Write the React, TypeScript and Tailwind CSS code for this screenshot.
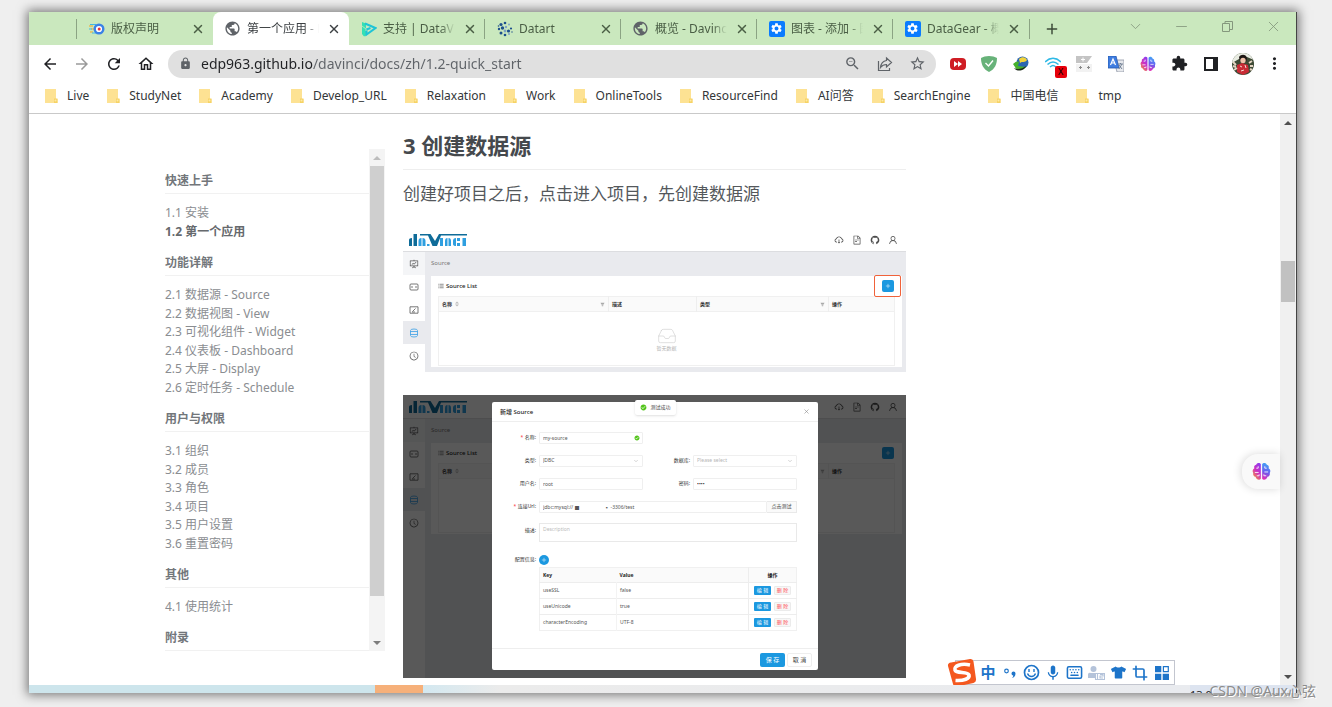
import type { ComponentType, ReactNode } from 'react';
import { clsx } from 'clsx';
import { ChevronDown, Crop, Inbox, Keyboard, List, Minus, Plus, X } from 'lucide-react';
import {
  AiFillFilter,
  AiOutlineClockCircle,
  AiOutlineCloudDownload,
  AiOutlineFileText,
  AiOutlineFundProjectionScreen,
  AiOutlineGithub,
  AiOutlineUser,
} from 'react-icons/ai';
import {
  MdArrowBack,
  MdArrowForward,
  MdCheckCircle,
  MdExtension,
  MdLock,
  MdMic,
  MdMoreVert,
  MdOutlineHome,
  MdPublic,
  MdRefresh,
  MdSettings,
  MdStarBorder,
  MdZoomOut,
} from 'react-icons/md';
import { FaTshirt } from 'react-icons/fa';

interface Tab {
  title: string;
  icon: ReactNode;
  active?: boolean;
}

interface Section {
  title: string;
  items: string[];
}

const GearIcon = () => (
  <span className="flex size-4 items-center justify-center rounded-xs bg-[#0a7cff] text-white">
    <MdSettings size={13} />
  </span>
);

const MetabaseIcon = () => (
  <svg viewBox="0 0 16 16" className="size-4">
    <path d="M0 5h4M2 8h3M1 11h3" stroke="#f5a623" strokeWidth="1.2" />
    <path d="M1 3.5h6M0 8h3M3 12h4" stroke="#3db9e8" strokeWidth="1.2" />
    <circle cx="10" cy="8" r="4.3" fill="#fff" stroke="#3b82e6" strokeWidth="2.4" />
    <circle cx="10.2" cy="8" r="1.5" fill="#e5343d" />
  </svg>
);

const DataVIcon = () => (
  <svg viewBox="0 0 16 16" className="size-4" fill="none" strokeWidth="2">
    <path d="M1 1l4 1.5v12L3 15.5 1 13z" fill="#35e0b4" />
    <path d="M4 2.5L14.5 7 5.5 13.5V8.5l4-1.5" stroke="#1fc4d6" />
    <path d="M1 5l4 3v2" stroke="#c9e9bd" strokeWidth="0.8" />
  </svg>
);

const DatartIcon = () => (
  <svg viewBox="0 0 16 16" className="size-4">
    {[
      [8, 2, 1.3], [4, 3.5, 1.6], [12, 3.5, 1], [2, 8, 1.2], [5.5, 7, 1.7], [9, 6, 1.2], [14, 7.5, 1.1],
      [4, 12, 1.5], [8, 10, 1.4], [11.5, 10, 1.6], [8, 14, 1.3], [12, 13, 1], [1.5, 5, 0.8], [15, 11, 0.7],
    ].map(([cx, cy, r], i) => (
      <circle key={i} cx={cx} cy={cy} r={r} fill={i % 3 === 2 ? '#7fa3c4' : '#1d4f8c'} />
    ))}
  </svg>
);

const tabs: Tab[] = [
  { title: '版权声明', icon: <MetabaseIcon /> },
  { title: '第一个应用 - Davinci', icon: <MdPublic size={17} className="text-[#5f6368]" />, active: true },
  { title: '支持 | DataV', icon: <DataVIcon /> },
  { title: 'Datart', icon: <DatartIcon /> },
  { title: '概览 - Davinci', icon: <MdPublic size={17} className="text-[#5f6368]" /> },
  { title: '图表 - 添加 - 图表', icon: <GearIcon /> },
  { title: 'DataGear - 概览', icon: <GearIcon /> },
];

const bookmarks = [
  'Live', 'StudyNet', 'Academy', 'Develop_URL', 'Relaxation', 'Work',
  'OnlineTools', 'ResourceFind', 'AI问答', 'SearchEngine', '中国电信', 'tmp',
];

const sections: Section[] = [
  { title: '快速上手', items: ['1.1 安装', '1.2 第一个应用'] },
  {
    title: '功能详解',
    items: [
      '2.1 数据源 - Source', '2.2 数据视图 - View', '2.3 可视化组件 - Widget',
      '2.4 仪表板 - Dashboard', '2.5 大屏 - Display', '2.6 定时任务 - Schedule',
    ],
  },
  {
    title: '用户与权限',
    items: ['3.1 组织', '3.2 成员', '3.3 角色', '3.4 项目', '3.5 用户设置', '3.6 重置密码'],
  },
  { title: '其他', items: ['4.1 使用统计'] },
  { title: '附录', items: [] },
];

const configRows = [
  { key: 'useSSL', value: 'false' },
  { key: 'useUnicode', value: 'true' },
  { key: 'characterEncoding', value: 'UTF-8' },
];

function BrainIcon({ className }: { className?: string }) {
  return (
    <svg viewBox="0 0 20 20" className={className}>
      <defs>
        <linearGradient id="brainLeft" x1="0.8" y1="0" x2="0.2" y2="1">
          <stop offset="0" stopColor="#8b3df0" />
          <stop offset="0.5" stopColor="#d02fc0" />
          <stop offset="1" stopColor="#f59a30" />
        </linearGradient>
        <linearGradient id="brainRight" x1="0.6" y1="0" x2="0.4" y2="1">
          <stop offset="0" stopColor="#3fa9f5" />
          <stop offset="0.55" stopColor="#6a5cf0" />
          <stop offset="1" stopColor="#e22fb5" />
        </linearGradient>
      </defs>
      <path d="M9.3 2.2C8.4.5 5 .6 4.4 3 2.5 3.3 1.8 5.2 2.5 6.6.6 7.5.2 10 1.3 11.5.7 13.5 2 15.3 3.7 15.6 4.5 18.8 8.3 19.5 9.3 17.5z" fill="url(#brainLeft)" />
      <path d="M10.7 2.2c.9-1.7 4.3-1.6 4.9.8 1.900.3 2.600 2.200 1.900 3.600 1.900.9 2.300 3.400 1.200 4.900.6 2-.7 3.800-2.400 4.100-.8 3.200-4.600 3.900-5.600 1.900z" fill="url(#brainRight)" />
      <path d="M4.5 6.5h2v-2M3 11h4M5 14.5h2.500V13M15.500 6.500h-2v-2M17 10.500h-4M15 14.500h-2.500V13" fill="none" stroke="#fff" strokeWidth="0.9" />
    </svg>
  );
}

function TabItem({ tab }: { tab: Tab }) {
  return (
    <div
      className={clsx(
        'flex w-[136px] items-center pr-2 pl-[11px]',
        tab.active ? 'rounded-t-lg bg-white text-[#3c4043]' : 'text-[#4a5e45]',
      )}
    >
      <span className="mr-1.5 flex w-[17px] shrink-0 justify-center">{tab.icon}</span>
      <button
        role="tab"
        aria-selected={!!tab.active}
        className="min-w-0 flex-1 overflow-hidden mask-r-from-80% text-left text-xs whitespace-nowrap"
      >
        {tab.title}
      </button>
      <button aria-label="Close tab" className="ml-2 shrink-0">
        <X size={14} strokeWidth={2.5} />
      </button>
    </div>
  );
}

function TabStrip() {
  return (
    <div className="flex h-[33px] shrink-0 bg-[#cae8be] pl-12">
      <div role="tablist" className="flex">
        {tabs.map((tab, i) => (
          <div key={tab.title} className="flex">
            {i !== 1 && i !== 2 && <span className="-ml-px h-5 w-px self-center bg-[#8ba383]" />}
            <TabItem tab={tab} />
          </div>
        ))}
      </div>
      <span className="h-5 w-px self-center bg-[#8ba383]" />
      <button aria-label="New tab" className="ml-3.5 text-[#3d4a39]">
        <Plus size={16} strokeWidth={2.2} />
      </button>
      <div className="ml-auto flex items-start gap-[29px] pt-1.5 pr-3.5 text-[#84977d]">
        <button aria-label="Search tabs"><ChevronDown size={17} strokeWidth={1.2} /></button>
        <button aria-label="Minimize"><Minus size={17} strokeWidth={1.2} /></button>
        <button aria-label="Restore">
          <svg viewBox="0 0 17 17" className="size-[17px]" fill="none" stroke="currentColor">
            <path d="M3.5 5.5h7v8h-7zM6 5.500V3.500h7.500v8h-3" />
          </svg>
        </button>
        <button aria-label="Close window"><X size={17} strokeWidth={1.2} /></button>
      </div>
    </div>
  );
}

function Extensions() {
  return (
    <div className="mr-1.5 ml-1.5 grid h-8 w-[348px] shrink-0 grid-cols-11 place-items-center">
      <button aria-label="Video player" className="flex h-3 w-4 items-center justify-center rounded-sm bg-[#cf1d24]">
        <svg viewBox="0 0 10 8" className="h-2 w-2.5" fill="#fff"><path d="M1 1l4 3-4 3zM5 1l4 3-4 3z" /></svg>
      </button>
      <button aria-label="AdGuard">
        <svg viewBox="0 0 16 16" className="size-4">
          <path d="M8 0c3 0 6 .8 8 2 0 6-2 11-8 14C2 13 0 8 0 2 2 .8 5 0 8 0z" fill="#67b279" />
          <path d="M4.5 7l3 3L12 4.500" fill="none" stroke="#fff" strokeWidth="1.4" />
        </svg>
      </button>
      <button aria-label="Download manager">
        <svg viewBox="0 0 16 16" className="size-4">
          <circle cx="9.5" cy="6.5" r="6" fill="#2b66b1" />
          <path d="M6 3c3-3 7-2 8 1-2 3-5 1-7 3z" fill="#f3d43b" />
          <path d="M0 8c3-3 5-3 6-2l-1 4 8 1c-3 4-9 4-11 0z" fill="#45b02c" />
          <path d="M1 12c4 2 8 1 12-2-1 4-8 7-12 2z" fill="#1d2b1b" />
        </svg>
      </button>
      <button aria-label="Wi-Fi" className="relative size-4">
        <svg viewBox="0 0 16 16" className="size-4" fill="none" stroke="#2fb9e6" strokeWidth="1.6">
          <path d="M0 6c5-5 11-5 16 0M2.5 8.5c4-3.500 7-3.500 11 0M5 11c2.500-2 3.500-2 6 0" />
        </svg>
        <span className="absolute top-2.5 left-2.5 flex size-3 items-center justify-center rounded-xs bg-red-600 text-[9px] text-black">X</span>
      </button>
      <button aria-label="Calculator">
        <svg viewBox="0 0 16 16" className="size-4">
          <path d="M0 0h16l-5 7H0z" fill="#c4c4c4" />
          <path d="M0 8h16v8H0z" fill="#f2f2f2" />
          <path d="M5 3.500h4M7 1.500v4" stroke="#fff" />
          <path d="M3 11.500h3M4.500 10v3M11 11.500h3M12.500 10v3" stroke="#888" fill="none" />
        </svg>
      </button>
      <button aria-label="Translate">
        <svg viewBox="0 0 16 16" className="size-4">
          <path d="M6 4h10v12H9z" fill="#e6e8ec" stroke="#8d96a5" strokeWidth="0.8" />
          <path d="M0 0h8l3 12H0z" fill="#3f7de0" stroke="#2558ad" strokeWidth="0.8" />
          <path d="M2.500 9L5 3l2.500 6M3.500 7h3" fill="none" stroke="#fff" strokeWidth="1.2" />
          <path d="M10 8h5M12.500 7v1M14 8l-3 5M11 9l3 4" fill="none" stroke="#6b7a90" strokeWidth="0.9" />
        </svg>
      </button>
      <button aria-label="Assistant"><BrainIcon className="size-4" /></button>
      <button aria-label="Extensions"><MdExtension size={17} /></button>
      <button aria-label="Side panel">
        <span className="block size-3.5 border-2 border-r-[5px] border-[#202124]" />
      </button>
      <button aria-label="Profile">
        <svg viewBox="0 0 22 22" className="size-[22px] rounded-full bg-[#3d4a35]">
          <path d="M0 0h22v7L15 4 7 6 0 10z" fill="#e9ece2" />
          <path d="M7 4c2-3 7-3 8 1l-1 4H8z" fill="#1e1714" />
          <circle cx="11" cy="7.5" r="2.7" fill="#efc3ab" />
          <path d="M5 12l5-2 6 2 1 7-6 3-6-3z" fill="#c92b35" />
          <path d="M1 9l3 3M17 10l3-2M2 17l3-2M18 16l2 1M1 13l3 1M18 13l3 0" stroke="#e3d3c2" strokeWidth="2" />
          <path d="M8 13l2 1M13 12l1 3M9 18l3-1" stroke="#f4dcd4" />
        </svg>
      </button>
      <button aria-label="Menu"><MdMoreVert size={19} /></button>
    </div>
  );
}

function ShareArrow() {
  return (
    <svg viewBox="0 0 16 16" className="size-4" fill="none" stroke="currentColor" strokeWidth="1.2">
      <path d="M1.500 5v9.500h11V12" />
      <path d="M9.500 2l5 4.500-5 4.500V8.500c-3 0-4.500 1-6 3 .4-3.500 2.500-6.500 6-7z" />
    </svg>
  );
}

function Toolbar() {
  const nav: { label: string; Icon: ComponentType<{ size?: number }>; dim?: boolean }[] = [
    { label: 'Back', Icon: MdArrowBack },
    { label: 'Forward', Icon: MdArrowForward, dim: true },
    { label: 'Reload', Icon: MdRefresh },
    { label: 'Home', Icon: MdOutlineHome },
  ];
  return (
    <div className="flex h-[37px] shrink-0 items-center bg-white pl-3 text-[#202124]">
      <div className="mr-[13px] flex gap-3.5">
        {nav.map(({ label, Icon, dim }) => (
          <button key={label} aria-label={label} className={clsx(dim && 'text-[#9a9a9a]')}>
            <Icon size={18} />
          </button>
        ))}
      </div>
      <div className="flex h-7 min-w-0 flex-1 items-center rounded-full bg-[#e0e0e0] pr-2.5 pl-[11px] text-[#5f6368]">
        <MdLock size={13} />
        {/* host part is darker than the path */}
        <input
          aria-label="Address"
          defaultValue="edp963.github.io/davinci/docs/zh/1.2-quick_start"
          className="ml-[9px] min-w-0 flex-1 bg-[linear-gradient(to_right,#202124_112px,#5f6368_112px)] bg-clip-text text-sm text-transparent"
        />
        <div className="flex gap-4">
          <button aria-label="Zoom"><MdZoomOut size={17} /></button>
          <button aria-label="Share"><ShareArrow /></button>
          <button aria-label="Bookmark this page"><MdStarBorder size={17} /></button>
        </div>
      </div>
      <Extensions />
    </div>
  );
}

function BookmarkBar() {
  return (
    <nav className="flex h-8 shrink-0 items-center gap-[18px] overflow-hidden border-b border-[#c9c9c9] bg-white pb-[3px] pl-4">
      {bookmarks.map((name) => (
        <a key={name} href="#" className="flex shrink-0 items-center gap-[9px] text-xs text-[#333638]">
          <svg viewBox="0 0 13 14" className="h-3.5 w-[13px]">
            <path d="M0 0h11v10h1.500v4H0z" fill="#fde293" />
            <path d="M9 9.500h3.500V14H9z" fill="#f6d365" />
            <circle cx="10.5" cy="11.5" r="1" fill="#fde9a9" />
          </svg>
          {name}
        </a>
      ))}
    </nav>
  );
}

function Arrow({ up, className }: { up?: boolean; className?: string }) {
  return (
    <svg viewBox="0 0 8 17" className={clsx('w-2 shrink-0', className)} fill="currentColor">
      <path d={up ? 'M0 11l4-4 4 4z' : 'M0 7l4 4 4-4z'} />
    </svg>
  );
}

function Sidebar() {
  return (
    <aside className="mt-[35px] flex h-[502px] w-[220px] shrink-0">
      <nav className="flex flex-1 flex-col gap-3 overflow-hidden pt-[22px] text-xs text-[#8a8d91]">
        {sections.map((section) => (
          <div key={section.title}>
            <h3 className="h-[23px] border-b border-[#f1f1f1] leading-5 font-bold text-[#72767a]">
              {section.title}
            </h3>
            <ul className="pt-2.5">
              {section.items.map((item) => (
                <li key={item} className="odd:h-[18px] odd:leading-[18px] even:h-[19px] even:leading-[19px]">
                  <a href="#" className={clsx(item.startsWith('1.2') && 'font-bold text-[#66696d]')}>
                    {item}
                  </a>
                </li>
              ))}
            </ul>
          </div>
        ))}
      </nav>
      <div className="flex w-4 flex-col items-center bg-[#f4f4f4]">
        <Arrow up className="h-[17px] text-[#bdbdbd]" />
        <span className="w-3.5 flex-1 bg-[#cfcfcf]" />
        <span className="h-[38px]" />
        <Arrow className="h-[17px] text-[#7d7d7d]" />
      </div>
    </aside>
  );
}

function DavinciLogo() {
  return (
    <svg viewBox="0 0 58 14" className="h-3.5 w-[58px]">
      <g fill="#0f6c99">
        <path d="M0 13V7q0-2 3-2v8zM4.500 1H8v12H4.500zM11 1h10.500l4.500 7 4-7H58v1.500H32L28 13h-4.500L19 2.500h-8z" />
      </g>
      <g fill="#2f9fe0">
        <path d="M9.500 13V8q0-3 3-3v8zM13.500 5q3 0 3 3v5h-3zM18 11h2.500v2H18zM31 5h3v8h-3zM36 13V8q0-3 2.500-3v8zM39.500 5Q42 5 42 8v5h-2.500zM44 8q0-3 3-3v8q-3 0-3-2zM48 5h3v3h-3zM48 10h3v3h-3zM53.500 5H57v8h-3.500z" />
      </g>
    </svg>
  );
}

const WidgetIcon = () => (
  <svg viewBox="0 0 10 8" className="h-2 w-2.5" fill="none" stroke="currentColor" strokeWidth="0.8">
    <path d="M1 .8h8v6.400H1zM3.500 5.500l3-3M3 6h3" />
  </svg>
);

const ViewIcon = () => (
  <svg viewBox="0 0 10 8" className="h-2 w-2.5" fill="none" stroke="currentColor" strokeWidth="0.8">
    <rect x="1" y="1" width="8" height="6" rx="1" />
    <path d="M3.500 3L2.500 4l1 1M6.500 3l1 1-1 1" />
  </svg>
);

const DatabaseIcon = () => (
  <svg viewBox="0 0 10 10" className="size-2.5" fill="none" stroke="currentColor" strokeWidth="0.8">
    <path d="M1.500 2.500q0-1.500 3.500-1.500t3.500 1.500v5q0 1.500-3.500 1.500t-3.500-1.500zM1.500 3.500h7M1.500 6.500h7" />
  </svg>
);

const railIcons: ComponentType<{ size?: number }>[] = [
  AiOutlineFundProjectionScreen,
  ViewIcon,
  WidgetIcon,
  DatabaseIcon,
  AiOutlineClockCircle,
];

const headerIcons = [AiOutlineCloudDownload, AiOutlineFileText, AiOutlineGithub, AiOutlineUser];

function SourceScreen({ highlight, className, children }: { highlight?: boolean; className: string; children?: ReactNode }) {
  return (
    <figure className={clsx('relative flex flex-col overflow-hidden bg-white text-[6px]', className)}>
      <div className="flex h-6 shrink-0 items-center justify-between border-b border-[#dcdde0] pr-2 pl-1.5">
        <DavinciLogo />
        <div className="flex gap-2 text-[#4c4c4c]">
          {headerIcons.map((Icon, i) => (
            <button key={i} aria-label="Header action"><Icon size={10} /></button>
          ))}
        </div>
      </div>
      <div className="flex min-h-0 flex-1 bg-[#e9eaee]">
        <div className="w-[22px] shrink-0 bg-white text-[#555]">
          {railIcons.map((Icon, i) => (
            <button
              key={i}
              aria-label="Section"
              className={clsx(
                'flex h-[23px] w-full items-center justify-center',
                i === 0 && 'bg-[#f4f5f7]',
                i === 3 && 'bg-[#e9eaee] text-[#3aa0e6]',
              )}
            >
              <Icon size={10} />
            </button>
          ))}
        </div>
        <div className="flex-1 pr-1 pl-1.5">
          <p className="h-6 leading-[23px] text-[#777]">Source</p>
          <div className="h-[91px] bg-white pr-[7px] pl-[7px]">
            <div className="flex h-5 items-center text-[#222]">
              <List size={6} className="mr-0.5" />
              <span className="flex-1 font-medium">Source List</span>
              <span
                className={clsx(
                  '-mr-1.5 flex h-[22px] w-[27px] items-center justify-center rounded-xs border',
                  highlight ? 'border-[#f0623a]' : 'border-transparent',
                )}
              >
                <button aria-label="Add source" className="flex size-3 items-center justify-center rounded-xs bg-[#1b98e0] text-white">
                  <Plus size={6} />
                </button>
              </span>
            </div>
            <table className="w-full table-fixed border border-[#f0f0f0] text-left text-[5px] leading-none">
              <thead className="bg-[#fafafa] text-[#333]">
                <tr className="h-[15px]">
                  <th className="border-r border-[#eee] px-[3px]">
                    <div className="flex items-center gap-[3px]">
                      名称
                      <svg viewBox="0 0 4 6" className="h-1.5 w-1" fill="#bbb"><path d="M0 2.500l2-2 2 2zM0 3.500l2 2 2-2z" /></svg>
                      <AiFillFilter size={5} className="ml-auto text-[#aaa]" />
                    </div>
                  </th>
                  <th className="w-[88px] border-r border-[#eee] px-[3px]">描述</th>
                  <th className="w-[132px] border-r border-[#eee] px-[3px]">
                    <div className="flex items-center justify-between">类型<AiFillFilter size={5} className="text-[#aaa]" /></div>
                  </th>
                  <th className="w-[66px] px-[3px]">操作</th>
                </tr>
              </thead>
              <tbody>
                <tr className="h-[54px] border-t border-[#f0f0f0]">
                  <td colSpan={4}>
                    <div className="flex flex-col items-center text-[#b5b5b5]">
                      <Inbox size={20} strokeWidth={0.8} className="text-[#d0d0d0]" />
                      暂无数据
                    </div>
                  </td>
                </tr>
              </tbody>
            </table>
          </div>
        </div>
      </div>
      {children}
    </figure>
  );
}

function FormRow({ label, htmlFor, required, children }: { label: string; htmlFor: string; required?: boolean; children: ReactNode }) {
  return (
    <div className="flex h-[23px] items-center gap-[3px]">
      <label htmlFor={htmlFor} className="w-11 shrink-0 text-right text-[#333]">
        {required && <span className="text-red-500">* </span>}
        {label}:
      </label>
      {children}
    </div>
  );
}

const field = 'h-3 w-full appearance-none rounded-[1px] border border-[#efefef] bg-white px-[3px] text-[5px] leading-none';

function SourceModal() {
  return (
    <div role="dialog" aria-label="新增 Source" className="absolute top-[7px] left-[89px] w-[326px] rounded-xs bg-white text-[5px] leading-none">
      <div className="flex h-5 items-center justify-between border-b border-[#eee] px-2">
        <h4 className="text-[6px] font-medium text-[#222]">新增 Source</h4>
        <button aria-label="Close" className="text-[#888]"><X size={7} /></button>
      </div>
      <form className="h-[226px] pt-1 pr-[21px]">
        <div className="grid grid-cols-2 gap-x-[3px]">
          <FormRow label="名称" htmlFor="name" required>
            <div className="relative flex-1">
              <input id="name" defaultValue="my-source" className={clsx(field, 'text-[#555]')} />
              <MdCheckCircle size={6} className="absolute top-[3px] right-[3px] text-[#52c41a]" />
            </div>
          </FormRow>
          <span />
          <FormRow label="类型" htmlFor="type">
            <div className="relative flex-1">
              <select id="type" className={clsx(field, 'text-[#555]')}><option>JDBC</option></select>
              <ChevronDown size={6} className="absolute top-[3px] right-1 text-[#aaa]" />
            </div>
          </FormRow>
          <FormRow label="数据库" htmlFor="db">
            <div className="relative flex-1">
              <select id="db" className={clsx(field, 'text-[#b5b5b5]')}><option>Please select</option></select>
              <ChevronDown size={6} className="absolute top-[3px] right-1 text-[#aaa]" />
            </div>
          </FormRow>
          <FormRow label="用户名" htmlFor="user">
            <input id="user" defaultValue="root" className={clsx(field, 'text-[#555]')} />
          </FormRow>
          <FormRow label="密码" htmlFor="password">
            <input id="password" type="password" defaultValue="root" className={clsx(field, 'text-[#222]')} />
          </FormRow>
        </div>
        <FormRow label="连接Url" htmlFor="url" required>
          <div className="flex flex-1">
            <input id="url" defaultValue="jdbc:mysql:// ■                   ▪ -3306/test" className={clsx(field, 'text-[#555]')} />
            <button type="button" className="w-[30px] shrink-0 border border-l-0 border-[#e9e9e9] bg-[#fafafa] text-[#444]">点击测试</button>
          </div>
        </FormRow>
        <div className="flex h-[34px] gap-[3px] pt-[5px]">
          <label htmlFor="desc" className="w-11 shrink-0 pt-[5px] text-right text-[#333]">描述:</label>
          <textarea id="desc" placeholder="Description" className="h-[19px] flex-1 resize-none border border-[#e9e9e9] px-[3px] pt-[3px] placeholder:text-[#bbb]" />
        </div>
        <div className="flex h-[15px] items-center gap-[3px]">
          <span className="w-11 text-right text-[#333]">配置信息:</span>
          <button type="button" aria-label="Add config" className="flex size-2.5 items-center justify-center rounded-full bg-[#1b98e0] text-white">
            <Plus size={6} />
          </button>
        </div>
        <table className="ml-[47px] w-[258px] table-fixed border-collapse border border-[#f0f0f0] text-left text-[#555]">
          <thead className="bg-[#fafafa] text-[#222]">
            <tr className="h-[15px]">
              <th className="w-[77px] px-[3px]">Key</th>
              <th className="px-[3px]">Value</th>
              <th className="w-12 border-l border-[#ededed] text-center">操作</th>
            </tr>
          </thead>
          <tbody>
            {configRows.map((row) => (
              <tr key={row.key} className="h-4 border-t border-[#ededed]">
                <td className="px-[3px]">{row.key}</td>
                <td className="border-l border-[#f3f3f3] px-[3px]">{row.value}</td>
                <td className="border-l border-[#ededed]">
                  <div className="flex justify-center gap-[3px]">
                    <button type="button" className="h-[9px] w-[17px] rounded-[1px] bg-[#1b98e0] text-white">编 辑</button>
                    <button type="button" className="h-[9px] w-[17px] rounded-[1px] border border-[#ebebeb] bg-[#f7f7f7] text-[#ff4d4f]">删 除</button>
                  </div>
                </td>
              </tr>
            ))}
          </tbody>
        </table>
      </form>
      <div className="flex h-[22px] items-center justify-end gap-0.5 border-t border-[#eee] pr-1.5">
        <button className="h-3.5 w-[25px] rounded-xs bg-[#1b98e0] text-[6px] text-white">保 存</button>
        <button className="h-3.5 w-[25px] rounded-xs border border-[#eee] text-[6px] text-[#444]">取 消</button>
      </div>
    </div>
  );
}

function Article() {
  return (
    <main className="ml-[18px] max-w-[503px] min-w-0 flex-1 pt-3.5">
      <h2 className="h-[42px] border-b border-[#eee] text-[22px] leading-[34px] font-bold text-[#45494d]">3 创建数据源</h2>
      <p className="h-[58px] pt-2.5 text-[17px] leading-7 text-[#54585c]">创建好项目之后，点击进入项目，先创建数据源</p>
      <SourceScreen highlight className="h-36" />
      <SourceScreen className="mt-[23px] h-[283px]">
        <div className="absolute inset-0 bg-black/65" />
        <SourceModal />
        <div role="status" className="absolute top-[5px] left-[232px] flex h-[15px] w-[41px] items-center justify-center gap-[3px] rounded-xs bg-white text-[5px] text-[#444] shadow">
          <MdCheckCircle size={7} className="text-[#52c41a]" />
          测试成功
        </div>
      </SourceScreen>
    </main>
  );
}

function SogouLogo() {
  return (
    <svg viewBox="0 0 30 30" className="size-[30px]">
      <path d="M4 4.500L23 1q3-.5 3.500 2.500L29 21q.5 3-2.500 4L10 28.500q-3 .5-4-2.500L1 8q-.5-3 3-3.500z" fill="#f4581f" />
      <path d="M23 7C14 5 6.500 8 8 12c1.500 4 12.500 1 14 5 1 3.500-5 6-13.500 5.500" fill="none" stroke="#fff" strokeWidth="3.6" />
    </svg>
  );
}

function InputMethodBar() {
  return (
    <div className="flex h-[25px] w-[220px] items-center border border-[#c3c6cf] bg-white pr-px text-[#1d74c9]">
      <span className="-ml-[9px] shrink-0"><SogouLogo /></span>
      <div className="grid flex-1 grid-cols-9 place-items-center">
        <button className="text-[15px] leading-none font-bold">中</button>
        <button aria-label="Punctuation">
          <svg viewBox="0 0 14 14" className="size-3.5" fill="currentColor">
            <circle cx="3.5" cy="5" r="1.8" fill="none" stroke="currentColor" strokeWidth="1.2" />
            <path d="M8.500 7.500a2 2 0 1 1 4 0c0 2.500-1.500 4-3.500 4.500 1-1 1.300-1.600 1.200-2.500-1-.1-1.700-.9-1.700-2z" />
          </svg>
        </button>
        <button aria-label="Emoji">
          <svg viewBox="0 0 17 17" className="size-[17px]" fill="none" stroke="currentColor" strokeWidth="1.7">
            <circle cx="8.5" cy="8.5" r="7" />
            <path d="M6 5v3M11 5v3M4.500 9.500c1.500 4 6.500 4 8 0" strokeWidth="1.4" />
          </svg>
        </button>
        <button aria-label="Voice"><MdMic size={18} /></button>
        <button aria-label="Keyboard"><Keyboard size={17} strokeWidth={2.2} /></button>
        <button aria-label="Handwriting" className="text-[#b4c3da]">
          <svg viewBox="0 0 17 16" className="h-4 w-[17px]" fill="currentColor">
            <circle cx="5.5" cy="4" r="3" />
            <path d="M0 13V9q1-2 3-1h5v5z" />
            <path d="M7.500 8.500h9v6h-9zM9.500 9v5M12 11h3v-1.500h-3M15 11h-3v2h3" fill="#fff" stroke="currentColor" strokeWidth="1.1" />
          </svg>
        </button>
        <button aria-label="Skins"><FaTshirt size={15} /></button>
        <button aria-label="Screenshot"><Crop size={16} strokeWidth={2.5} /></button>
        <button aria-label="Toolbox">
          <svg viewBox="0 0 14 14" className="size-3.5" fill="currentColor">
            <path d="M0 0h6.300v6.300H0zM0 7.700h6.300V14H0zM7.700 7.700H14V14H7.700z" />
            <path d="M8.400.7h4.900v4.900H8.400z" fill="none" stroke="currentColor" strokeWidth="1.2" />
          </svg>
        </button>
      </div>
    </div>
  );
}

function PageScrollbar() {
  return (
    <div className="flex w-4 shrink-0 flex-col items-center bg-[#f0f0f0] text-[#505050]">
      <Arrow up className="h-[17px]" />
      <span className="mt-[130px] h-[41px] w-3.5 bg-[#c1c1c1]" />
      <Arrow className="mt-auto h-[17px]" />
    </div>
  );
}

export default function App() {
  return (
    <div className="relative flex h-screen flex-col overflow-hidden bg-[#efefef] pt-3 pr-[35px] pb-3.5 pl-[29px] font-['Noto_Sans','Noto_Sans_CJK_SC',sans-serif]">
      <div className="flex min-h-0 flex-1 flex-col border-r border-[#444] bg-white shadow-[0_0_10px_2px_rgba(0,0,0,0.5)]">
        <TabStrip />
        <Toolbar />
        <BookmarkBar />
        <div className="relative flex min-h-0 flex-1 overflow-hidden">
          <div className="flex min-w-0 flex-1 pl-[136px]">
            <Sidebar />
            <Article />
          </div>
          <button
            aria-label="Assistant"
            className="absolute top-[340px] right-4 flex h-[35px] w-[38px] items-center justify-center rounded-l-2xl bg-[#f9f9f9] shadow-[-1px_0_8px_rgba(0,0,0,0.15)]"
          >
            <BrainIcon className="size-[19px]" />
          </button>
          <PageScrollbar />
          <div className="absolute right-[121px] bottom-0">
            <InputMethodBar />
          </div>
        </div>
        <div className="flex h-2 shrink-0 overflow-hidden">
          <span className="w-[346px] bg-[#cde5ec]" />
          <span className="w-12 bg-[#f6b07a]" />
          <span className="flex-1 bg-linear-to-r from-[#d3e8f0] via-[#ebebeb] via-10% to-[#e9ebef]" />
          <span className="w-[106px] bg-[#dde4f0] text-[11px] leading-5 text-[#222]">13:0</span>
        </div>
      </div>
      <span className="absolute right-4 bottom-1.5 text-sm leading-5 text-[#8c8c8c] text-shadow-[1px_1px_0_white]">CSDN @Aux心弦</span>
    </div>
  );
}
